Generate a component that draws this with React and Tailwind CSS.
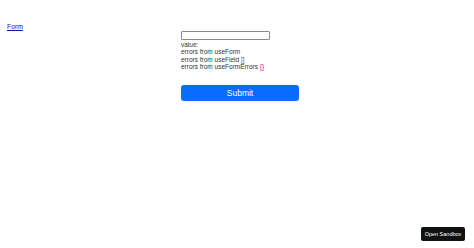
export default function App() {
  return (
    <div className="relative w-[474px] h-[248px] bg-white overflow-hidden" style={{ fontFamily: '"Liberation Sans", Arial, sans-serif' }}>
      <div className="pt-[23px] pl-[7px] h-[31px] leading-[8px] text-[6.8px]">
        <a href="#" className="text-[#1a0dab] underline">Form</a>
      </div>
      <div className="ml-[181px] w-[118px] flex flex-col">
        <input className="w-[89px] h-[9px] border border-[#8a8a8a] rounded-[1px]" />
        <div className="text-[6.5px] leading-[7.6px] text-[#333] mt-[0.5px]">
          <div>value:</div>
          <div>errors from useForm</div>
          <div>errors from useField <span className="text-[#9b1c8b]">[]</span></div>
          <div>errors from useFormErrors <span className="text-[#9b1c8b]">{'{}'}</span></div>
        </div>
        <button className="mt-[14px] w-[118px] h-[16px] rounded-[3px] bg-[#0a6cff] text-white text-[8.5px] leading-[16px] font-normal">Submit</button>
      </div>
      <div className="absolute left-[421px] top-[227px] w-[44px] h-[14px] bg-[#111] rounded-[2px] text-white text-[5.5px] leading-[14px] text-center whitespace-nowrap">Open Sandbox</div>
    </div>
  );
}
